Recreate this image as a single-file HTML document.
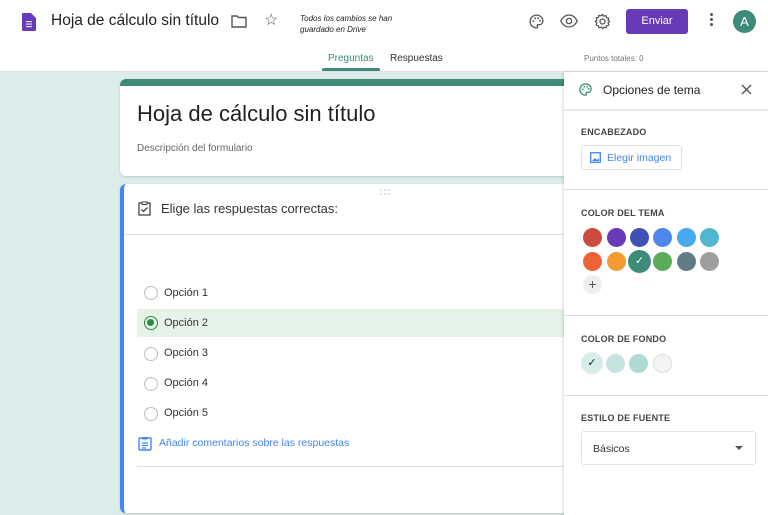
<!DOCTYPE html>
<html><head><meta charset="utf-8"><style>
*{box-sizing:border-box;margin:0;padding:0}
body{width:768px;height:515px;overflow:hidden;background:#dcecea;font-family:"Liberation Sans",sans-serif;position:relative;color:#202124}
.abs{position:absolute}
.hdr{left:0;top:0;width:768px;height:72px;background:#fff;border-bottom:1px solid #e0e0e0}
.circ{position:absolute;width:19px;height:19px;border-radius:50%}
.sec{position:absolute;left:581px;font-size:9px;font-weight:bold;color:#444;letter-spacing:.2px}
.radio{position:absolute;left:144px;width:14px;height:14px;border:1.5px solid #bbb;border-radius:50%}
.opt{position:absolute;left:164px;font-size:11px;color:#333}
</style></head><body>
<div class="abs hdr"></div>
<svg class="abs" style="left:22px;top:13px" width="14" height="18" viewBox="0 0 14 18"><path d="M0 1.5Q0 0 1.5 0H9L14 5V16.5Q14 18 12.5 18H1.5Q0 18 0 16.5Z" fill="#673ab7"/><rect x="4" y="8" width="6" height="1.2" fill="#fff" opacity=".8"/><rect x="4" y="10.5" width="6" height="1.2" fill="#fff" opacity=".8"/><rect x="4" y="13" width="6" height="1.2" fill="#fff" opacity=".8"/></svg>
<div class="abs" style="left:51px;top:12px;font-size:15.5px;color:#202124">Hoja de cálculo sin título</div>
<svg class="abs" style="left:231px;top:14px" width="16" height="14" viewBox="0 0 16 14"><path d="M1 2H6L7.5 3.5H15V13H1Z" fill="none" stroke="#555" stroke-width="1.4"/></svg>
<div class="abs" style="left:264px;top:10px;font-size:16px;color:#555">☆</div>
<div class="abs" style="left:300px;top:13px;font-size:8px;font-style:italic;line-height:11px;color:#222">Todos los cambios se han<br>guardado en Drive</div>
<svg class="abs" style="left:528px;top:13px" width="17" height="17" viewBox="0 0 24 24"><path d="M12 3a9 9 0 0 0 0 18c1 0 1.5-.7 1.5-1.4 0-.8-.6-1.1-.6-1.8 0-.8.7-1.3 1.5-1.3H16a5 5 0 0 0 5-5C21 6.5 17 3 12 3z" fill="none" stroke="#555" stroke-width="1.8"/><circle cx="7.5" cy="11.5" r="1.3" fill="#555"/><circle cx="10" cy="7.5" r="1.3" fill="#555"/><circle cx="14.5" cy="7.5" r="1.3" fill="#555"/><circle cx="17" cy="11" r="1.3" fill="#555"/></svg>
<svg class="abs" style="left:560px;top:14px" width="18" height="14" viewBox="0 0 24 18"><path d="M1 9C4 3 8 1 12 1s8 2 11 8c-3 6-7 8-11 8S4 15 1 9z" fill="none" stroke="#555" stroke-width="1.8"/><circle cx="12" cy="9" r="3.5" fill="none" stroke="#555" stroke-width="1.8"/></svg>
<svg class="abs" style="left:594px;top:13px" width="17" height="17" viewBox="0 0 24 24"><path d="M12 2l2 2.5 3-.8.8 3 3 .8-.8 3L22 12l-2 2 .8 3-3 .8-.8 3-3-.8L12 22l-2-2-3 .8-.8-3-3-.8.8-3L2 12l2-2-.8-3 3-.8.8-3 3 .8z" fill="none" stroke="#555" stroke-width="1.8"/><circle cx="12" cy="12" r="3.5" fill="none" stroke="#555" stroke-width="1.8"/></svg>
<div class="abs" style="left:626px;top:9px;width:62px;height:25px;background:#673ab7;border-radius:3px;color:#fff;font-size:11px;text-align:center;line-height:25px">Enviar</div>
<div class="abs" style="left:710px;top:13px;width:3px;line-height:5px;font-size:0">
<div style="width:3px;height:3px;background:#555;border-radius:50%;margin-bottom:2px"></div><div style="width:3px;height:3px;background:#555;border-radius:50%;margin-bottom:2px"></div><div style="width:3px;height:3px;background:#555;border-radius:50%"></div></div>
<div class="abs" style="left:733px;top:10px;width:23px;height:23px;border-radius:50%;background:#3d8b78;color:#fff;font-size:13px;text-align:center;line-height:23px">A</div>
<div class="abs" style="left:328px;top:53px;font-size:10px;color:#3d8b78">Preguntas</div>
<div class="abs" style="left:322px;top:68px;width:58px;height:3px;background:#3d8b78;border-radius:2px 2px 0 0"></div>
<div class="abs" style="left:390px;top:53px;font-size:10px;color:#333">Respuestas</div>
<div class="abs" style="left:584px;top:54px;font-size:8px;color:#777">Puntos totales: 0</div>

<div class="abs" style="left:120px;top:79px;width:450px;height:97px;background:#fff;border-radius:6px;overflow:hidden;box-shadow:0 1px 2px rgba(0,0,0,.15)"><div style="height:7px;background:#3d8b78"></div></div>
<div class="abs" style="left:137px;top:101px;font-size:22px;color:#202124">Hoja de cálculo sin título</div>
<div class="abs" style="left:137px;top:143px;font-size:10px;color:#666">Descripción del formulario</div>

<div class="abs" style="left:120px;top:184px;width:450px;height:329px;background:#fff;border-radius:6px;border-left:4px solid #4285f4;box-shadow:0 1px 2px rgba(0,0,0,.15)"></div>
<svg class="abs" style="left:380px;top:189px" width="10" height="6" viewBox="0 0 10 6"><g fill="#bbb"><circle cx="1" cy="1" r=".8"/><circle cx="5" cy="1" r=".8"/><circle cx="9" cy="1" r=".8"/><circle cx="1" cy="5" r=".8"/><circle cx="5" cy="5" r=".8"/><circle cx="9" cy="5" r=".8"/></g></svg>
<svg class="abs" style="left:138px;top:201px" width="13" height="15" viewBox="0 0 13 15"><rect x="1" y="2" width="11" height="12" fill="none" stroke="#444" stroke-width="1.3"/><rect x="4" y="1" width="5" height="2.5" fill="#fff" stroke="#444" stroke-width="1"/><path d="M3.5 8.5l2 2 4-4" fill="none" stroke="#444" stroke-width="1.3"/></svg>
<div class="abs" style="left:161px;top:201px;font-size:13px;color:#333">Elige las respuestas correctas:</div>
<div class="abs" style="left:124px;top:234px;width:446px;height:1px;background:#e0e0e0"></div>
<div class="radio" style="top:286px"></div><div class="opt" style="top:287px">Opción 1</div>
<div class="abs" style="left:137px;top:309px;width:433px;height:28px;background:#e6f3e8"></div>
<div class="radio" style="top:316px;border-color:#2e8b3e"><div style="width:7px;height:7px;border-radius:50%;background:#2e8b3e;margin:2px"></div></div><div class="opt" style="top:317px">Opción 2</div>
<div class="radio" style="top:347px"></div><div class="opt" style="top:347px">Opción 3</div>
<div class="radio" style="top:377px"></div><div class="opt" style="top:377px">Opción 4</div>
<div class="radio" style="top:407px"></div><div class="opt" style="top:407px">Opción 5</div>
<svg class="abs" style="left:138px;top:436px" width="14" height="15" viewBox="0 0 14 15"><rect x="1" y="2" width="12" height="12" rx="1" fill="none" stroke="#4285f4" stroke-width="1.4"/><rect x="4.5" y="1" width="5" height="2.5" fill="#4285f4"/><path d="M4 7h6M4 9.5h6M4 12h4" stroke="#4285f4" stroke-width="1.2"/></svg>
<div class="abs" style="left:159px;top:437px;font-size:10.5px;color:#4285f4">Añadir comentarios sobre las respuestas</div>
<div class="abs" style="left:137px;top:466px;width:433px;height:1px;background:#e0e0e0"></div>

<div class="abs" style="left:564px;top:72px;width:204px;height:443px;background:#fff;box-shadow:-1px 0 3px rgba(0,0,0,.15)"></div>
<svg class="abs" style="left:578px;top:82px" width="15" height="15" viewBox="0 0 24 24"><path d="M12 3a9 9 0 0 0 0 18c1 0 1.5-.7 1.5-1.4 0-.8-.6-1.1-.6-1.8 0-.8.7-1.3 1.5-1.3H16a5 5 0 0 0 5-5C21 6.5 17 3 12 3z" fill="none" stroke="#3d8b78" stroke-width="2"/><circle cx="7.5" cy="11.5" r="1.4" fill="#3d8b78"/><circle cx="10" cy="7.5" r="1.4" fill="#3d8b78"/><circle cx="14.5" cy="7.5" r="1.4" fill="#3d8b78"/><circle cx="17" cy="11" r="1.4" fill="#3d8b78"/></svg>
<div class="abs" style="left:603px;top:83px;font-size:12px;color:#202124">Opciones de tema</div>
<svg class="abs" style="left:741px;top:84px" width="11" height="11" viewBox="0 0 11 11"><path d="M1 1l9 9M10 1l-9 9" stroke="#555" stroke-width="1.4"/></svg>
<div class="abs" style="left:564px;top:109px;width:204px;height:2px;background:#e8e8e8"></div>
<div class="sec" style="top:127px">ENCABEZADO</div>
<div class="abs" style="left:581px;top:145px;width:101px;height:25px;border:1px solid #e3e3e3;border-radius:3px"></div>
<svg class="abs" style="left:590px;top:152px" width="11" height="11" viewBox="0 0 11 11"><rect x=".7" y=".7" width="9.6" height="9.6" fill="none" stroke="#4285f4" stroke-width="1.3"/><path d="M2 9l3-3 2 2 2-2v3z" fill="#4285f4"/></svg>
<div class="abs" style="left:607px;top:152px;font-size:10.5px;color:#4285f4">Elegir imagen</div>
<div class="abs" style="left:564px;top:189px;width:204px;height:1px;background:#e0e0e0"></div>
<div class="sec" style="top:208px">COLOR DEL TEMA</div>
<div class="circ" style="left:583px;top:228px;background:#cb4b3f"></div>
<div class="circ" style="left:607px;top:228px;background:#673ab7"></div>
<div class="circ" style="left:630px;top:228px;background:#3f51b5"></div>
<div class="circ" style="left:653px;top:228px;background:#4f86ec"></div>
<div class="circ" style="left:677px;top:228px;background:#46a8ee"></div>
<div class="circ" style="left:700px;top:228px;background:#51b7cf"></div>
<div class="circ" style="left:583px;top:252px;background:#ef6236"></div>
<div class="circ" style="left:607px;top:252px;background:#f49c32"></div>
<div class="circ" style="left:628px;top:250px;width:23px;height:23px;background:#3d8b78;color:#fff;font-size:11px;text-align:center;line-height:23px">✓</div>
<div class="circ" style="left:653px;top:252px;background:#5aab5a"></div>
<div class="circ" style="left:677px;top:252px;background:#617c87"></div>
<div class="circ" style="left:700px;top:252px;background:#9e9e9e"></div>
<div class="circ" style="left:583px;top:275px;background:#eee;color:#555;font-size:14px;text-align:center;line-height:18px">+</div>
<div class="abs" style="left:564px;top:315px;width:204px;height:1px;background:#e0e0e0"></div>
<div class="sec" style="top:334px">COLOR DE FONDO</div>
<div class="circ" style="left:581px;top:352px;width:22px;height:22px;background:#d8ecea;color:#222;font-size:11px;text-align:center;line-height:22px">✓</div>
<div class="circ" style="left:606px;top:354px;background:#c7e3df"></div>
<div class="circ" style="left:629px;top:354px;background:#afd9d3"></div>
<div class="circ" style="left:653px;top:354px;background:#f4f4f4;border:1px solid #ddd"></div>
<div class="abs" style="left:564px;top:395px;width:204px;height:1px;background:#e0e0e0"></div>
<div class="sec" style="top:413px">ESTILO DE FUENTE</div>
<div class="abs" style="left:581px;top:431px;width:175px;height:34px;border:1px solid #e3e3e3;border-radius:3px"></div>
<div class="abs" style="left:593px;top:443px;font-size:10.5px;color:#333">Básicos</div>
<div class="abs" style="left:735px;top:446px;width:0;height:0;border-left:4px solid transparent;border-right:4px solid transparent;border-top:4px solid #555"></div>
</body></html>
